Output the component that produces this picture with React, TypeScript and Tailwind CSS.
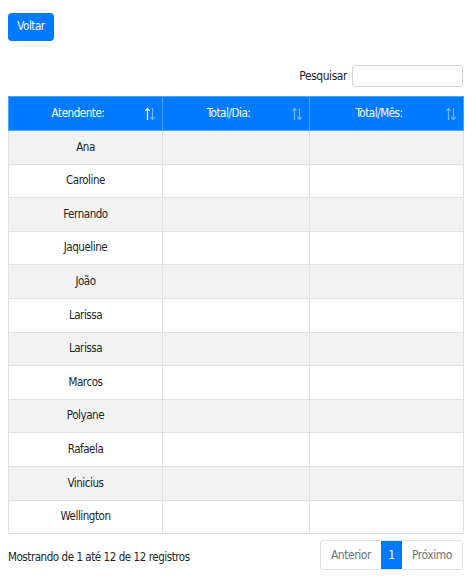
import React from "react"

const atendentes = [
	"Ana",
	"Caroline",
	"Fernando",
	"Jaqueline",
	"João",
	"Larissa",
	"Larissa",
	"Marcos",
	"Polyane",
	"Rafaela",
	"Vinicius",
	"Wellington",
]

// up/down arrows of the sortable column header
const SortIcon = ({ active }: { active?: boolean }) => (
	<svg
		className="absolute right-[6px] top-1/2 -translate-y-1/2"
		width="12"
		height="14"
		viewBox="0 0 12 14"
		fill="none"
		strokeWidth="1.2"
	>
		<g stroke={active ? "#ffffff" : "rgba(255,255,255,0.45)"}>
			<path d="M3.5 13V1.5M1.4 3.8L3.5 1.5L5.6 3.8" />
		</g>
		<g stroke="rgba(255,255,255,0.45)">
			<path d="M8.5 1V12.5M6.4 10.2L8.5 12.5L10.6 10.2" />
		</g>
	</svg>
)

export default function App() {
	return (
		<div
			className="w-[474px] h-[579px] bg-white text-[#212529] text-[11.5px] tracking-[-0.45px]"
			style={{ fontFamily: '"DejaVu Sans Condensed", Inter, sans-serif', fontStretch: "condensed" }}
		>
			<div className="pt-[13px] pl-2">
				<button className="h-[28px] w-[46px] rounded-[4px] bg-[#007bff] text-white text-[11.5px]">Voltar</button>
			</div>

			<div className="flex justify-end items-center gap-[5px] mt-[24px] pr-[11px]">
				<span className="text-[12px]">Pesquisar</span>
				<input className="w-[111px] h-[22px] border border-[#ced4da] rounded-[3px]" />
			</div>

			<table className="ml-2 mt-[9px] w-[455px] border-collapse table-fixed">
				<thead>
					<tr className="bg-[#007bff] text-white h-[34px]">
						<th className="w-[154px] relative font-normal pr-[15px] border border-[#4da3ff]">
							Atendente:
							<SortIcon active />
						</th>
						<th className="w-[147px] relative font-normal pr-[15px] border border-[#4da3ff]">
							Total/Dia:
							<SortIcon />
						</th>
						<th className="w-[154px] relative font-normal pr-[15px] border border-[#4da3ff]">
							Total/Mês:
							<SortIcon />
						</th>
					</tr>
				</thead>
				<tbody>
					{atendentes.map((nome, i) => (
						<tr key={i} className={i % 2 === 0 ? "bg-[#f2f2f2]" : "bg-white"}>
							<td className="h-[33.6px] text-center border border-[#dee2e6]">{nome}</td>
							<td className="border border-[#dee2e6]"></td>
							<td className="border border-[#dee2e6]"></td>
						</tr>
					))}
				</tbody>
			</table>

			<div className="flex items-center justify-between ml-2 w-[455px] mt-[6px]">
				<span className="pt-[4px] text-[11.5px]">Mostrando de 1 até 12 de 12 registros</span>
				<div className="flex h-[30px] border border-[#dee2e6] rounded-[3px] text-[12px]">
					<span className="flex items-center px-[10px] text-[#6c757d]">Anterior</span>
					<span className="flex items-center justify-center w-[21px] bg-[#007bff] text-white">1</span>
					<span className="flex items-center px-[10px] text-[#6c757d]">Próximo</span>
				</div>
			</div>
		</div>
	)
}
